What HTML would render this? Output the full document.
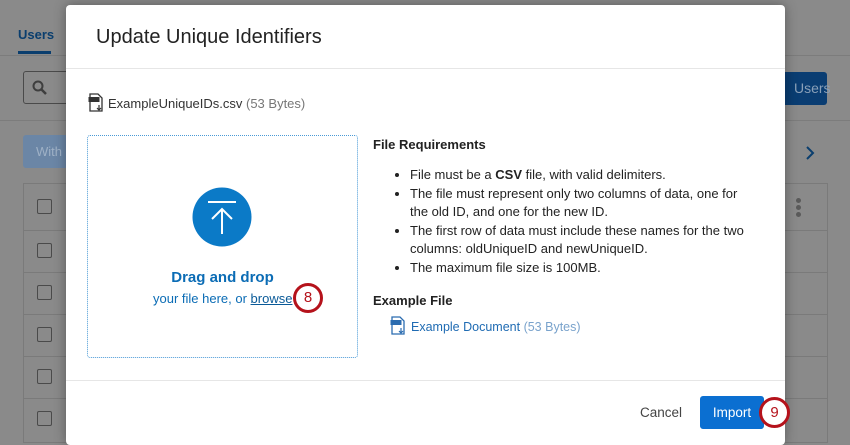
<!DOCTYPE html>
<html><head><style>
*{margin:0;padding:0;box-sizing:border-box}
body{width:850px;height:435px;overflow:hidden;background:#8a8a8a;font-family:"Liberation Sans",sans-serif;position:relative}
.a{position:absolute}
.cb{position:absolute;left:37px;width:15px;height:15px;border:1.5px solid #4a4a4a;border-radius:2px}
.row{position:absolute;left:23px;width:805px;height:1px;background:#7a7a7a}
.modal{position:absolute;left:66px;top:5px;width:719px;height:440px;background:#fff;border-radius:4px;box-shadow:0 0 12px rgba(0,0,0,.35)}
</style></head><body>
<div class="a" style="left:18px;top:27px;font-size:13px;font-weight:bold;color:#0a3e6e">Users</div>
<div class="a" style="left:18px;top:51px;width:33px;height:3px;background:#0a3e6e"></div>
<div class="a" style="left:0;top:55px;width:850px;height:1px;background:#7c7c7c"></div>
<div class="a" style="left:23px;top:71px;width:50px;height:33px;border:1.5px solid #4a4a4a;border-radius:3px"></div>
<svg class="a" style="left:32px;top:80px" width="16" height="16"><circle cx="6" cy="6" r="4.5" stroke="#3e3e3e" stroke-width="2" fill="none"/><line x1="9.5" y1="9.5" x2="14" y2="14" stroke="#3e3e3e" stroke-width="2.5"/></svg>
<div class="a" style="left:770px;top:72px;width:57px;height:33px;background:#0a3d72;border-radius:3px;color:#8aa0b8;font-size:14px;padding:8px 0 0 24px">Users</div>
<div class="a" style="left:0;top:120px;width:850px;height:1px;background:#7c7c7c"></div>
<div class="a" style="left:23px;top:135px;width:45px;height:33px;background:#6b86a6;border-radius:3px;color:#9fb1c6;font-size:13px;padding:9px 0 0 13px">With</div>
<svg class="a" style="left:804px;top:145px" width="12" height="16"><path d="M3 2 L9 8 L3 14" stroke="#0a3e6e" stroke-width="2" fill="none"/></svg>
<div class="a" style="left:23px;top:183px;width:805px;height:260px;border:1px solid #7a7a7a"></div>
<div class="row" style="top:230px"></div><div class="row" style="top:272px"></div><div class="row" style="top:314px"></div><div class="row" style="top:356px"></div><div class="row" style="top:398px"></div>
<div class="cb" style="top:199px"></div><div class="cb" style="top:243px"></div><div class="cb" style="top:285px"></div><div class="cb" style="top:327px"></div><div class="cb" style="top:369px"></div><div class="cb" style="top:411px"></div>
<div class="a" style="left:796px;top:198px;width:5px;height:5px;border-radius:50%;background:#5a5a5a;box-shadow:0 7px 0 #5a5a5a,0 14px 0 #5a5a5a"></div>

<div class="modal">
<div class="a" style="left:30px;top:21px;font-size:20px;color:#222">Update Unique Identifiers</div>
<div class="a" style="left:0;top:63px;width:719px;height:1px;background:#e6e6e6"></div>
<svg class="a" style="left:22px;top:88px" width="16" height="20"><path d="M2 1 H10 L14 5 V18 H2 Z" fill="none" stroke="#333" stroke-width="1.3"/><rect x="0.5" y="4" width="11" height="5" fill="#333"/><path d="M11 12 V17 M9 15 L11 17 L13 15" stroke="#333" stroke-width="1.2" fill="none"/></svg>
<div class="a" style="left:42px;top:91px;font-size:13px;color:#333">ExampleUniqueIDs.csv <span style="color:#777">(53 Bytes)</span></div>
<div class="a" style="left:21px;top:130px;width:271px;height:223px;border:1.5px dotted #4a9ad6;border-radius:3px"></div>
<svg class="a" style="left:126px;top:182px" width="60" height="60"><circle cx="30" cy="30" r="29.5" fill="#0b7ac7"/><path d="M16 15 H44 M30 47 V22 M20 32 L30 22 L40 32" stroke="#fff" stroke-width="2" fill="none"/></svg>
<div class="a" style="left:21px;top:264px;width:271px;text-align:center;font-size:15px;font-weight:bold;color:#0b6cb5">Drag and drop</div>
<div class="a" style="left:87px;top:286px;font-size:13px;color:#0b6cb5">your file here, or <span style="text-decoration:underline;color:#0a5a98">browse</span></div>
<div class="a" style="left:227px;top:278px;width:30px;height:30px;border:3px solid #b5121b;border-radius:50%;background:#fff;color:#b5121b;font-size:15px;text-align:center;line-height:24px">8</div>
<div class="a" style="left:307px;top:132px;font-size:13px;font-weight:bold;color:#222">File Requirements</div>
<ul class="a" style="left:327px;top:161px;width:357px;font-size:13px;color:#222;line-height:18.5px;padding-left:17px">
<li>File must be a <b>CSV</b> file, with valid delimiters.</li>
<li>The file must represent only two columns of data, one for the old ID, and one for the new ID.</li>
<li>The first row of data must include these names for the two columns: oldUniqueID and newUniqueID.</li>
<li>The maximum file size is 100MB.</li>
</ul>
<div class="a" style="left:307px;top:288px;font-size:13px;font-weight:bold;color:#222">Example File</div>
<svg class="a" style="left:324px;top:311px" width="16" height="20"><path d="M2 1 H10 L14 5 V18 H2 Z" fill="none" stroke="#2b6cb0" stroke-width="1.3"/><rect x="0.5" y="4" width="11" height="5" fill="#2b6cb0"/><path d="M11 12 V17 M9 15 L11 17 L13 15" stroke="#2b6cb0" stroke-width="1.2" fill="none"/></svg>
<div class="a" style="left:345px;top:315px;font-size:12.5px;color:#1f6bb3">Example Document <span style="color:#7aa3cc">(53 Bytes)</span></div>
<div class="a" style="left:0;top:375px;width:719px;height:1px;background:#e6e6e6"></div>
<div class="a" style="left:574px;top:400px;font-size:13.5px;color:#444">Cancel</div>
<div class="a" style="left:634px;top:391px;width:64px;height:33px;background:#0b6fd1;border-radius:3px;color:#fff;font-size:13.5px;text-align:center;line-height:33px">Import</div>
</div>
<div class="a" style="left:759px;top:397px;width:31px;height:31px;border:3px solid #b5121b;border-radius:50%;background:#fff;color:#b5121b;font-size:15px;text-align:center;line-height:25px">9</div>
</body></html>
